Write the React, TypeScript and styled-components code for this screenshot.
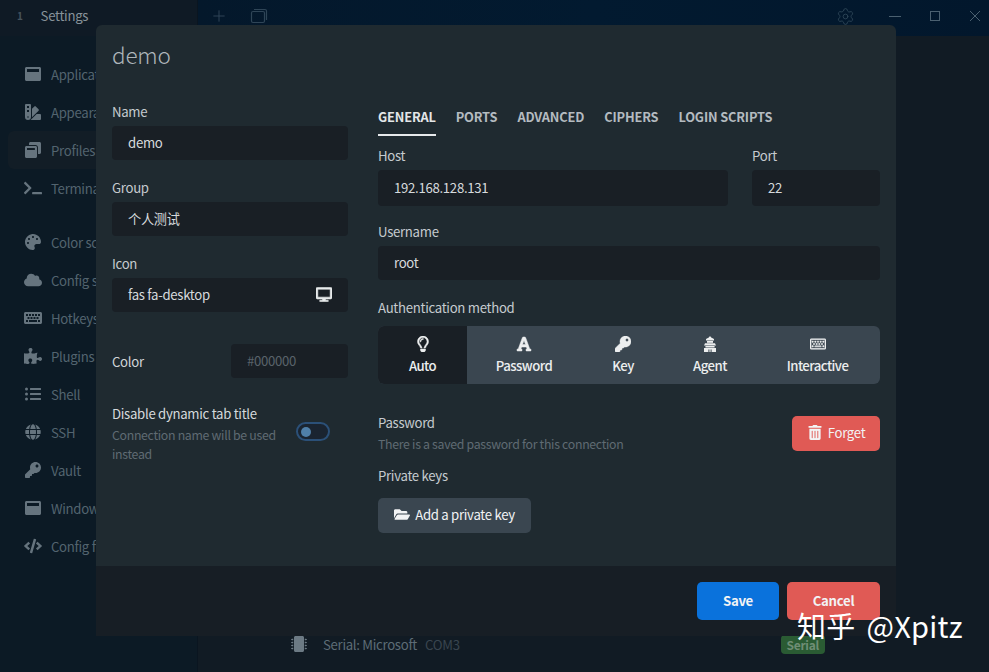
import React from "react";
import styled, { createGlobalStyle } from "styled-components";
import {
  FaWindowMaximize, FaSwatchbook, FaWindowRestore, FaTerminal, FaPalette, FaCloud, FaKeyboard,
  FaPuzzlePiece, FaListUl, FaGlobe, FaKey, FaCode, FaRegLightbulb, FaFont, FaRegKeyboard,
  FaTrashAlt, FaFolderOpen, FaDesktop, FaMicrochip,
} from "react-icons/fa";
import { Plus, Settings as Gear } from "lucide-react";

const FONT = `"Noto Sans CJK SC", "Source Sans Pro", "Noto Sans", sans-serif`;

const Global = createGlobalStyle`
  html, body { margin: 0; padding: 0; background: #0d1a25; }
  * { box-sizing: border-box; }
  body { font-family: ${FONT}; font-size: 13.2px; letter-spacing: -0.3px; }
`;

const Page = styled.div`
  position: relative;
  width: 989px;
  height: 672px;
  overflow: hidden;
  display: flex;
  background: #0f1b27;
`;

const Sidebar = styled.aside`
  width: 198px;
  flex: none;
  background: #0c1a25;
  display: flex;
  flex-direction: column;
  border-right: 1px solid #0a1520;
`;
const AppTab = styled.div`
  height: 36px;
  display: flex;
  align-items: center;
  padding: 0 0 5px 17px;
  gap: 18px;
  color: #87929a;
  background: #0f1a25;
  margin-bottom: 19px;
`;
const TabIndex = styled.span`
  font-size: 10px;
  font-weight: 700;
  color: #46535d;
`;
const NavGroup = styled.nav`
  display: flex;
  flex-direction: column;
  padding: 0 8px;
  margin-bottom: 16px;
`;
const NavItem = styled.div<{ $active?: boolean }>`
  height: 38px;
  display: flex;
  align-items: center;
  gap: 9px;
  padding-left: 16px;
  color: #53646f;
  border-radius: 6px;
  background: ${(p) => (p.$active ? "#121d26" : "transparent")};
  white-space: nowrap;
  svg { width: 18px; height: 16px; flex: none; color: #66747e; }
`;

const Main = styled.main`
  flex: 1;
  display: flex;
  flex-direction: column;
`;
const TopBar = styled.header`
  height: 36px;
  flex: none;
  display: flex;
  align-items: center;
  background: linear-gradient(90deg, #04182b, #021a30 50%, #02172c);
  color: #2f4557;
`;
const TopLeft = styled.div`
  display: flex;
  align-items: center;
  gap: 22px;
  padding: 0 0 4px 12px;
  flex: 1;
`;
const GearSlot = styled.div`
  width: 40px;
  height: 36px;
  margin-right: 10px;
  padding-bottom: 4px;
  display: flex;
  align-items: center;
  justify-content: center;
  color: #2f4759;
`;
const WinButtons = styled.div`
  display: flex;
  margin-right: -6px;
`;
const WinButton = styled.div`
  width: 40px;
  height: 36px;
  padding-bottom: 4px;
  display: flex;
  align-items: center;
  justify-content: center;
  color: #4b6070;
`;
const Content = styled.div`
  flex: 1;
  background: #111b24;
  display: flex;
  flex-direction: column;
  justify-content: flex-end;
`;
const ProfileRow = styled.div`
  height: 36px;
  margin-left: 93px;
  margin-right: 164px;
  display: flex;
  align-items: center;
  gap: 16px;
  padding-bottom: 20px;
  color: #5d6c76;
  svg { width: 16px; height: 16px; color: #6c7a84; flex: none; }
`;
const ProfileText = styled.span`
  flex: 1;
`;
const Port = styled.span`
  color: #39454f;
  margin-left: 8px;
`;
const Badge = styled.span`
  background: #2a5b33;
  color: #6f8e75;
  font-size: 12px;
  font-weight: 700;
  line-height: 19px;
  padding: 0 6px;
  border-radius: 4px;
`;

const Modal = styled.section`
  position: absolute;
  left: 96px;
  top: 25px;
  width: 800px;
  height: 611px;
  border-radius: 6px 6px 0 0;
  display: flex;
  flex-direction: column;
  background: #1f2a30;
  overflow: hidden;
`;
const ModalBody = styled.div`
  flex: 1;
  padding: 16px;
`;
const Title = styled.h1`
  margin: 0 0 35px;
  font-size: 22.5px;
  line-height: 26px;
  font-weight: 300;
  letter-spacing: -0.2px;
  color: #aeb6bb;
`;
const Columns = styled.div`
  display: grid;
  grid-template-columns: 236px 502px;
  gap: 30px;
`;
const Column = styled.div`
  display: flex;
  flex-direction: column;
`;
const Label = styled.label`
  display: block;
  line-height: 20px;
  color: #c5cbcf;
  margin-bottom: 4px;
`;
const Field = styled.div<{ $grow?: boolean; $width?: number; $gap?: number }>`
  margin-bottom: ${(p) => p.$gap ?? 18}px;
  ${(p) => (p.$grow ? "flex: 1;" : "")}
  ${(p) => (p.$width ? `width: ${p.$width}px; flex: none;` : "")}
`;
const Input = styled.div<{ $h?: number; $muted?: boolean }>`
  height: ${(p) => p.$h ?? 34}px;
  background: #191f25;
  border-radius: 4px;
  display: flex;
  align-items: center;
  justify-content: space-between;
  padding: 0 16px 1px;
  color: ${(p) => (p.$muted ? "#59636b" : "#d6dadd")};
  white-space: nowrap;
  svg { width: 16px; height: 15px; color: #e8ebec; stroke: currentColor; stroke-width: 24; }
`;
const ColorRow = styled.div`
  margin-top: 14px;
  display: flex;
  align-items: center;
  justify-content: space-between;
  color: #d0d5d8;
`;
const ColorInput = styled(Input)`
  width: 117px;
`;
const ToggleRow = styled.div`
  margin-top: 26px;
  display: flex;
  align-items: flex-start;
`;
const ToggleText = styled.div`
  width: 184px;
`;
const ToggleTitle = styled.div`
  color: #d5d9dc;
  line-height: 20px;
`;
const Hint = styled.div`
  color: #5f6b73;
  font-size: 12.3px;
  line-height: 19px;
  margin-top: 2px;
`;
const Toggle = styled.div`
  width: 34px;
  height: 19px;
  margin-top: 18px;
  border-radius: 10px;
  border: 2px solid #2b5078;
  background: #1a2430;
  padding: 2.5px 3px;
`;
const Knob = styled.div`
  width: 10px;
  height: 10px;
  border-radius: 50%;
  background: #4f7fa8;
`;

const Tabs = styled.div`
  height: 34px;
  display: flex;
  gap: 20px;
  margin-bottom: 10px;
`;
const Tab = styled.div<{ $active?: boolean }>`
  height: 34px;
  line-height: 29px;
  font-size: 12.8px;
  font-weight: 700;
  letter-spacing: -0.15px;
  white-space: nowrap;
  color: ${(p) => (p.$active ? "#e3e6e8" : "#b4bbc0")};
  border-bottom: 2px solid ${(p) => (p.$active ? "#e6e9eb" : "transparent")};
`;
const HostRow = styled.div`
  display: flex;
  gap: 24px;
`;
const Segments = styled.div`
  height: 58px;
  display: grid;
  grid-template-columns: 89px 114px 84px 90px 1fr;
  margin-top: 4px;
  border-radius: 6px;
  overflow: hidden;
  background: #3a4650;
`;
const Segment = styled.div<{ $active?: boolean }>`
  display: flex;
  flex-direction: column;
  align-items: center;
  justify-content: center;
  gap: 5px;
  background: ${(p) => (p.$active ? "#191f25" : "transparent")};
  color: #eceeef;
  font-weight: 500;
  line-height: 18px;
  letter-spacing: -0.55px;
  white-space: nowrap;
  svg { width: 16px; height: 16px; stroke: currentColor; stroke-width: 16; }
`;
const PasswordRow = styled.div`
  margin-top: 29px;
  display: flex;
  align-items: center;
  justify-content: space-between;
`;
const PasswordText = styled.div`
  color: #c5cbcf;
  line-height: 20px;
`;
const Button = styled.button<{ $bg: string; $bold?: boolean; $w?: number; $h?: number }>`
  all: unset;
  box-sizing: border-box;
  display: inline-flex;
  align-items: center;
  justify-content: center;
  gap: 5px;
  width: ${(p) => (p.$w ? `${p.$w}px` : "auto")};
  height: ${(p) => p.$h ?? 35}px;
  padding-bottom: 2px;
  background: ${(p) => p.$bg};
  border-radius: 5px;
  color: #f2f3f4;
  font-family: ${FONT};
  font-size: 13.2px;
  letter-spacing: -0.3px;
  font-weight: ${(p) => (p.$bold ? 700 : 400)};
  svg { width: 16px; height: 15px; flex: none; }
`;
const KeysLabel = styled(Label)`
  margin: 12px 0 12px;
`;
const Footer = styled.footer`
  height: 70px;
  flex: none;
  background: #171e25;
  display: flex;
  justify-content: flex-end;
  gap: 8px;
  padding: 16px 16px 0;
`;
const Watermark = styled.div`
  position: absolute;
  left: 797px;
  top: 606px;
  font-family: "Noto Sans CJK SC", sans-serif;
  font-size: 29px;
  line-height: 38px;
  color: #fff;
  white-space: nowrap;
  letter-spacing: 0.3px;
  word-spacing: 4px;
`;

const first = [
  { icon: FaWindowMaximize, label: "Application" },
  { icon: FaSwatchbook, label: "Appearance" },
  { icon: FaWindowRestore, label: "Profiles", active: true },
  { icon: FaTerminal, label: "Terminal" },
];
const second = [
  { icon: FaPalette, label: "Color schemes" },
  { icon: FaCloud, label: "Config sync" },
  { icon: FaKeyboard, label: "Hotkeys" },
  { icon: FaPuzzlePiece, label: "Plugins" },
  { icon: FaListUl, label: "Shell" },
  { icon: FaGlobe, label: "SSH" },
  { icon: FaKey, label: "Vault" },
  { icon: FaWindowMaximize, label: "Window" },
  { icon: FaCode, label: "Config file" },
];

const Pagoda = () => (
  <svg viewBox="0 0 16 16" fill="currentColor" style={{ stroke: "none" }}>
    <path d="M8 0l1.2 1.6L12 3v1.4H4V3l2.8-1.4z" />
    <rect x="5" y="5" width="6" height="1.8" />
    <path d="M3 7.2h10l1 2.2H2z" />
    <path d="M3.4 10h9.2v1.4H3.4z" />
    <path d="M2 12h12v4H9.6v-2.6H8.6V16H7.4v-2.6H6.4V16H2z" />
  </svg>
);

const methods = [
  { icon: FaRegLightbulb, label: "Auto", active: true },
  { icon: FaFont, label: "Password" },
  { icon: FaKey, label: "Key" },
  { icon: Pagoda, label: "Agent" },
  { icon: FaRegKeyboard, label: "Interactive" },
];
const tabs = ["GENERAL", "PORTS", "ADVANCED", "CIPHERS", "LOGIN SCRIPTS"];

const WinMin = () => (
  <svg width="14" height="14" viewBox="0 0 14 14"><path d="M1 7.5h12" stroke="currentColor" fill="none" /></svg>
);
const WinMax = () => (
  <svg width="12" height="12" viewBox="0 0 12 12"><rect x="1.5" y="1.5" width="9" height="9" stroke="currentColor" fill="none" /></svg>
);
const WinClose = () => (
  <svg width="14" height="14" viewBox="0 0 14 14"><path d="M2 2l10 10M12 2L2 12" stroke="currentColor" fill="none" /></svg>
);
const Tile = () => (
  <svg width="18" height="16" viewBox="0 0 18 16" fill="none" stroke="currentColor" strokeWidth="1.2">
    <rect x="1.5" y="3.5" width="13" height="11" rx="1.5" />
    <path d="M4 1.5h11a1.5 1.5 0 0 1 1.5 1.5v9" />
  </svg>
);

export default function App() {
  return (
    <Page>
      <Global />
      <Sidebar>
        <AppTab>
          <TabIndex>1</TabIndex>
          <span>Settings</span>
        </AppTab>
        <NavGroup>
          {first.map((n) => (
            <NavItem key={n.label} $active={n.active}>
              <n.icon />
              {n.label}
            </NavItem>
          ))}
        </NavGroup>
        <NavGroup>
          {second.map((n) => (
            <NavItem key={n.label}>
              <n.icon />
              {n.label}
            </NavItem>
          ))}
        </NavGroup>
      </Sidebar>
      <Main>
        <TopBar>
          <TopLeft>
            <Plus size={18} strokeWidth={1.3} />
            <Tile />
          </TopLeft>
          <GearSlot><Gear size={19} strokeWidth={1.1} /></GearSlot>
          <WinButtons>
            <WinButton><WinMin /></WinButton>
            <WinButton><WinMax /></WinButton>
            <WinButton><WinClose /></WinButton>
          </WinButtons>
        </TopBar>
        <Content>
          <ProfileRow>
            <FaMicrochip />
            <ProfileText>
              Serial: Microsoft<Port>COM3</Port>
            </ProfileText>
            <Badge>Serial</Badge>
          </ProfileRow>
        </Content>
      </Main>
      <Modal>
        <ModalBody>
          <Title>demo</Title>
          <Columns>
            <Column>
              <Field>
                <Label>Name</Label>
                <Input>demo</Input>
              </Field>
              <Field>
                <Label>Group</Label>
                <Input>个人测试</Input>
              </Field>
              <Field>
                <Label>Icon</Label>
                <Input>
                  fas fa-desktop
                  <FaDesktop />
                </Input>
              </Field>
              <ColorRow>
                Color
                <ColorInput $muted>#000000</ColorInput>
              </ColorRow>
              <ToggleRow>
                <ToggleText>
                  <ToggleTitle>Disable dynamic tab title</ToggleTitle>
                  <Hint>Connection name will be used instead</Hint>
                </ToggleText>
                <Toggle><Knob /></Toggle>
              </ToggleRow>
            </Column>
            <Column>
              <Tabs>
                {tabs.map((t, i) => (
                  <Tab key={t} $active={i === 0}>{t}</Tab>
                ))}
              </Tabs>
              <HostRow>
                <Field $grow $gap={16}>
                  <Label>Host</Label>
                  <Input $h={36}>192.168.128.131</Input>
                </Field>
                <Field $width={128} $gap={16}>
                  <Label>Port</Label>
                  <Input $h={36}>22</Input>
                </Field>
              </HostRow>
              <Field>
                <Label>Username</Label>
                <Input>root</Input>
              </Field>
              <Label>Authentication method</Label>
              <Segments>
                {methods.map((m) => (
                  <Segment key={m.label} $active={m.active}>
                    <m.icon />
                    {m.label}
                  </Segment>
                ))}
              </Segments>
              <PasswordRow>
                <div>
                  <PasswordText>Password</PasswordText>
                  <Hint>There is a saved password for this connection</Hint>
                </div>
                <Button $bg="#e05a55" $w={88}>
                  <FaTrashAlt />
                  Forget
                </Button>
              </PasswordRow>
              <KeysLabel>Private keys</KeysLabel>
              <Button $bg="#3a4650" $w={153}>
                <FaFolderOpen />
                Add a private key
              </Button>
            </Column>
          </Columns>
        </ModalBody>
        <Footer>
          <Button $bg="#0a72dc" $bold $w={82} $h={38}>Save</Button>
          <Button $bg="#e05a55" $bold $w={93} $h={38}>Cancel</Button>
        </Footer>
      </Modal>
      <Watermark>知乎 @Xpitz</Watermark>
    </Page>
  );
}
